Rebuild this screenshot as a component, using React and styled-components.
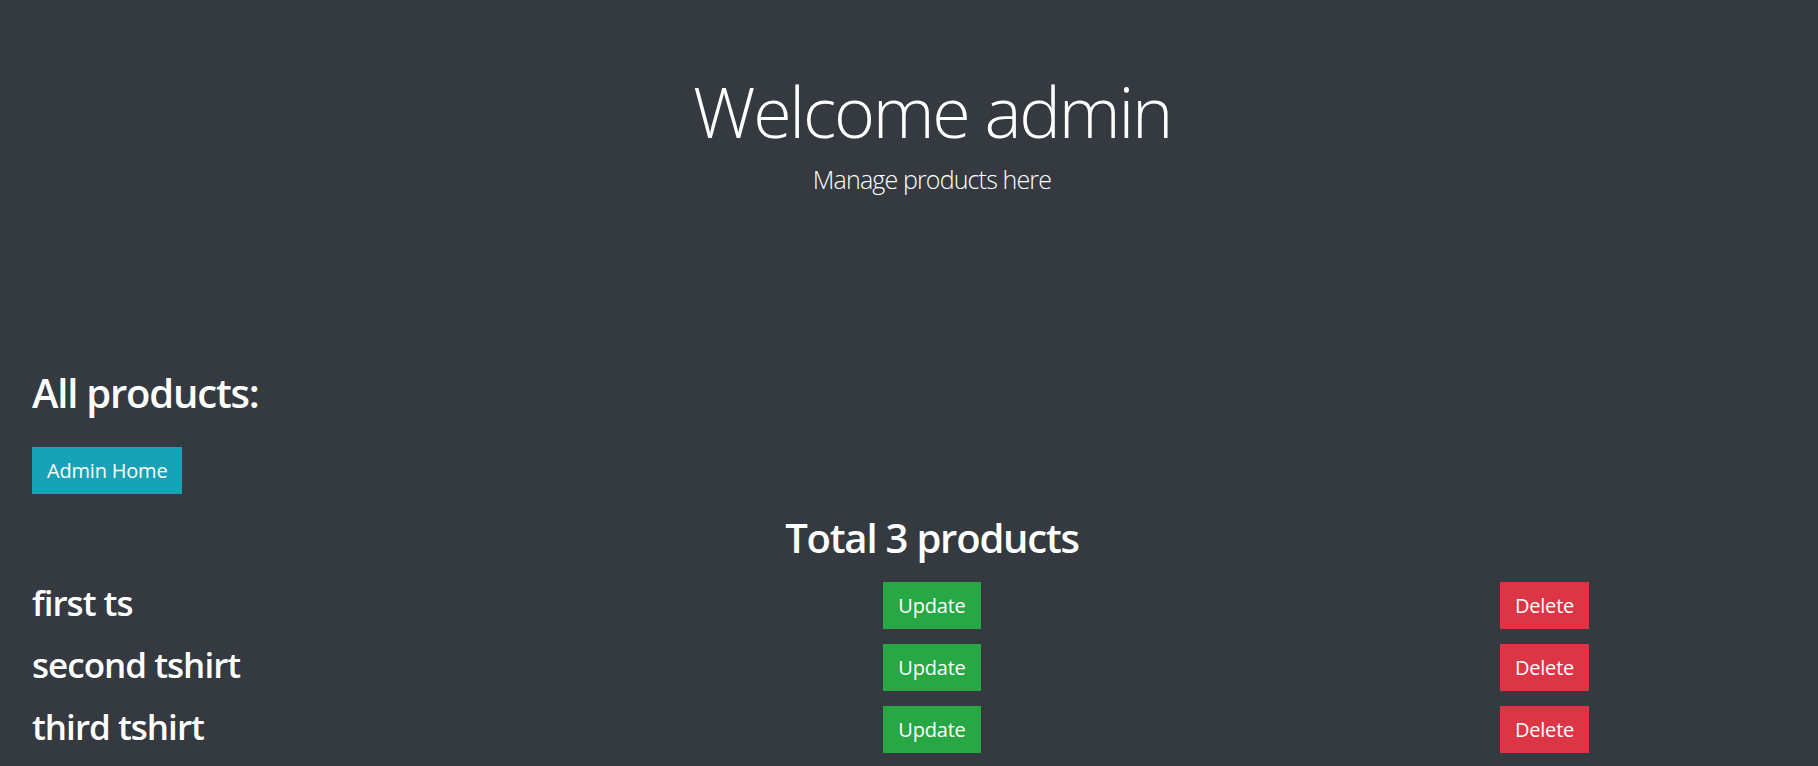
import React from "react";
import styled, { createGlobalStyle } from "styled-components";

const GlobalStyle = createGlobalStyle`
  html, body {
    margin: 0;
    padding: 0;
    background: #343a40;
    overflow: hidden;
  }
  body {
    font-family: "Open Sans", "Noto Sans", sans-serif;
    color: #fff;
  }
  * {
    box-sizing: border-box;
  }
`;

const Page = styled.div`
  width: 1864px;
  min-height: 766px;
  padding: 0 32px;
  background: #343a40;
`;

const Hero = styled.header`
  text-align: center;
  padding: 69px 0 170px;
  h1 {
    margin: 0 0 8px;
    font-size: 70px;
    line-height: 84px;
    font-weight: 300;
    letter-spacing: -0.032em;
  }
  p {
    margin: 0;
    font-size: 25px;
    line-height: 37.5px;
    font-weight: 300;
    letter-spacing: -0.034em;
  }
`;

const Section = styled.section`
  h2 {
    margin: 0 0 30px;
    font-size: 40px;
    line-height: 48px;
    font-weight: 600;
    letter-spacing: -0.03em;
  }
`;

const TotalTitle = styled.h2`
  && {
    margin: 20px 0;
    text-align: center;
  }
`;

const ProductRow = styled.div`
  display: grid;
  grid-template-columns: repeat(3, 1fr);
  column-gap: 37.5px;
  align-items: start;
  margin-bottom: 10px;
`;

const Cell = styled.div`
  text-align: ${(p) => p.align || "center"};
`;

const ProductName = styled.h3`
  margin: 0 0 10px;
  font-size: 35px;
  line-height: 42px;
  font-weight: 600;
  letter-spacing: -0.028em;
`;

const colors = {
  info: "#17a2b8",
  success: "#28a745",
  danger: "#dc3545",
};

const Button = styled.button`
  display: inline-flex;
  align-items: center;
  justify-content: center;
  height: 47px;
  padding: 0 15px;
  border: none;
  border-radius: 0;
  background: ${(p) => colors[p.variant]};
  color: #fff;
  font-family: inherit;
  font-size: 20px;
  font-weight: 400;
  letter-spacing: -0.01em;
  cursor: pointer;
`;

const products = [
  { id: 1, name: "first ts" },
  { id: 2, name: "second tshirt" },
  { id: 3, name: "third tshirt" },
];

export default function App() {
  return (
    <>
      <GlobalStyle />
      <Page>
        <Hero>
          <h1>Welcome admin</h1>
          <p>Manage products here</p>
        </Hero>
        <Section>
          <h2>All products:</h2>
          <Button variant="info">Admin Home</Button>
          <TotalTitle>Total {products.length} products</TotalTitle>
          {products.map((product) => (
            <ProductRow key={product.id}>
              <Cell align="left">
                <ProductName>{product.name}</ProductName>
              </Cell>
              <Cell>
                <Button variant="success">Update</Button>
              </Cell>
              <Cell>
                <Button variant="danger">Delete</Button>
              </Cell>
            </ProductRow>
          ))}
        </Section>
      </Page>
    </>
  );
}
